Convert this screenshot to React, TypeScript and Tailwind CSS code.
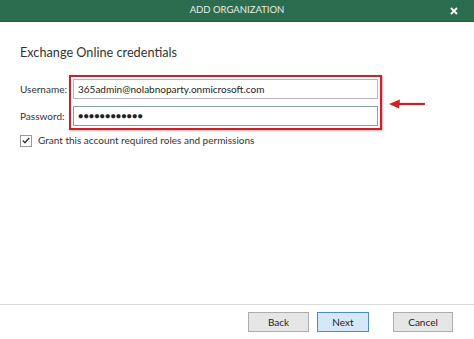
import React from "react";

export default function App() {
  const font = { fontFamily: 'Lato, "Noto Sans", sans-serif' };
  return (
    <div className="w-[474px] h-[339px] bg-white flex flex-col overflow-hidden" style={font}>
      <div className="h-[22px] bg-[#2b6d4e] flex items-center relative shrink-0 border-b border-[#245c42]">
        <div className="flex-1 text-center text-[9.5px] text-[#e6efe9]">ADD ORGANIZATION</div>
        <svg className="absolute right-[16px] top-[7px]" width="8" height="8" viewBox="0 0 8 8">
          <path d="M1 1 L7 7 M7 1 L1 7" stroke="#ffffff" strokeWidth="1.8" />
        </svg>
      </div>
      <div className="flex-1 flex flex-col pl-[20px]">
        <div className="mt-[20px] text-[12.7px] text-[#333] leading-[20px]">Exchange Online credentials</div>
        <div className="mt-[13px] flex items-start">
          <div className="flex flex-col gap-[7px] pt-[4px] w-[49px] text-[10px] text-[#333]">
            <div className="h-[20px] leading-[20px]">Username:</div>
            <div className="h-[20px] leading-[20px]">Password:</div>
          </div>
          <div className="flex items-center">
            <div className="border-2 border-[#cc1f2c] p-[2px] flex flex-col gap-[7px] shadow-[1px_1px_2px_rgba(120,0,0,0.35)]">
              <div className="w-[305px] h-[20px] border border-[#b8b8b8] flex items-center pl-[4px] text-[10px] text-[#222]">
                365admin@nolabnoparty.onmicrosoft.com
              </div>
              <div className="w-[305px] h-[20px] border border-[#8aa3a3] flex items-center pl-[4px] text-[8.5px] text-[#222] tracking-[0.3px]">
                ●●●●●●●●●●●●
              </div>
            </div>
            <svg className="ml-[7px] mt-[2px]" width="37" height="10" viewBox="0 0 37 10">
              <path d="M9 5 L36 5" stroke="#d21f26" strokeWidth="2.2" />
              <path d="M0 5 L11 0.5 L10 9.5 Z" fill="#d21f26" />
            </svg>
          </div>
        </div>
        <div className="mt-[3px] flex items-center gap-[6px]">
          <div className="w-[12px] h-[12px] border border-[#999] flex items-center justify-center bg-white">
            <svg width="8" height="7" viewBox="0 0 8 7">
              <path d="M0.8 3.5 L3 5.7 L7.2 1" stroke="#333" strokeWidth="1.4" fill="none" />
            </svg>
          </div>
          <div className="text-[10px] text-[#333]">Grant this account required roles and permissions</div>
        </div>
      </div>
      <div className="h-[35px] border-t border-[#dcdcdc] flex items-start pt-[7px] shrink-0">
        <div className="ml-[248px] flex">
          <button className="w-[61px] h-[20px] border border-[#adadad] bg-[#e6e6e6] text-[10px] text-[#222]">Back</button>
          <button className="ml-[8px] w-[52px] h-[20px] border border-[#4a8ccc] bg-[#d5e8f7] text-[10px] text-[#222]">Next</button>
          <button className="ml-[24px] w-[60px] h-[20px] border border-[#adadad] bg-[#e6e6e6] text-[10px] text-[#222]">Cancel</button>
        </div>
      </div>
    </div>
  );
}
